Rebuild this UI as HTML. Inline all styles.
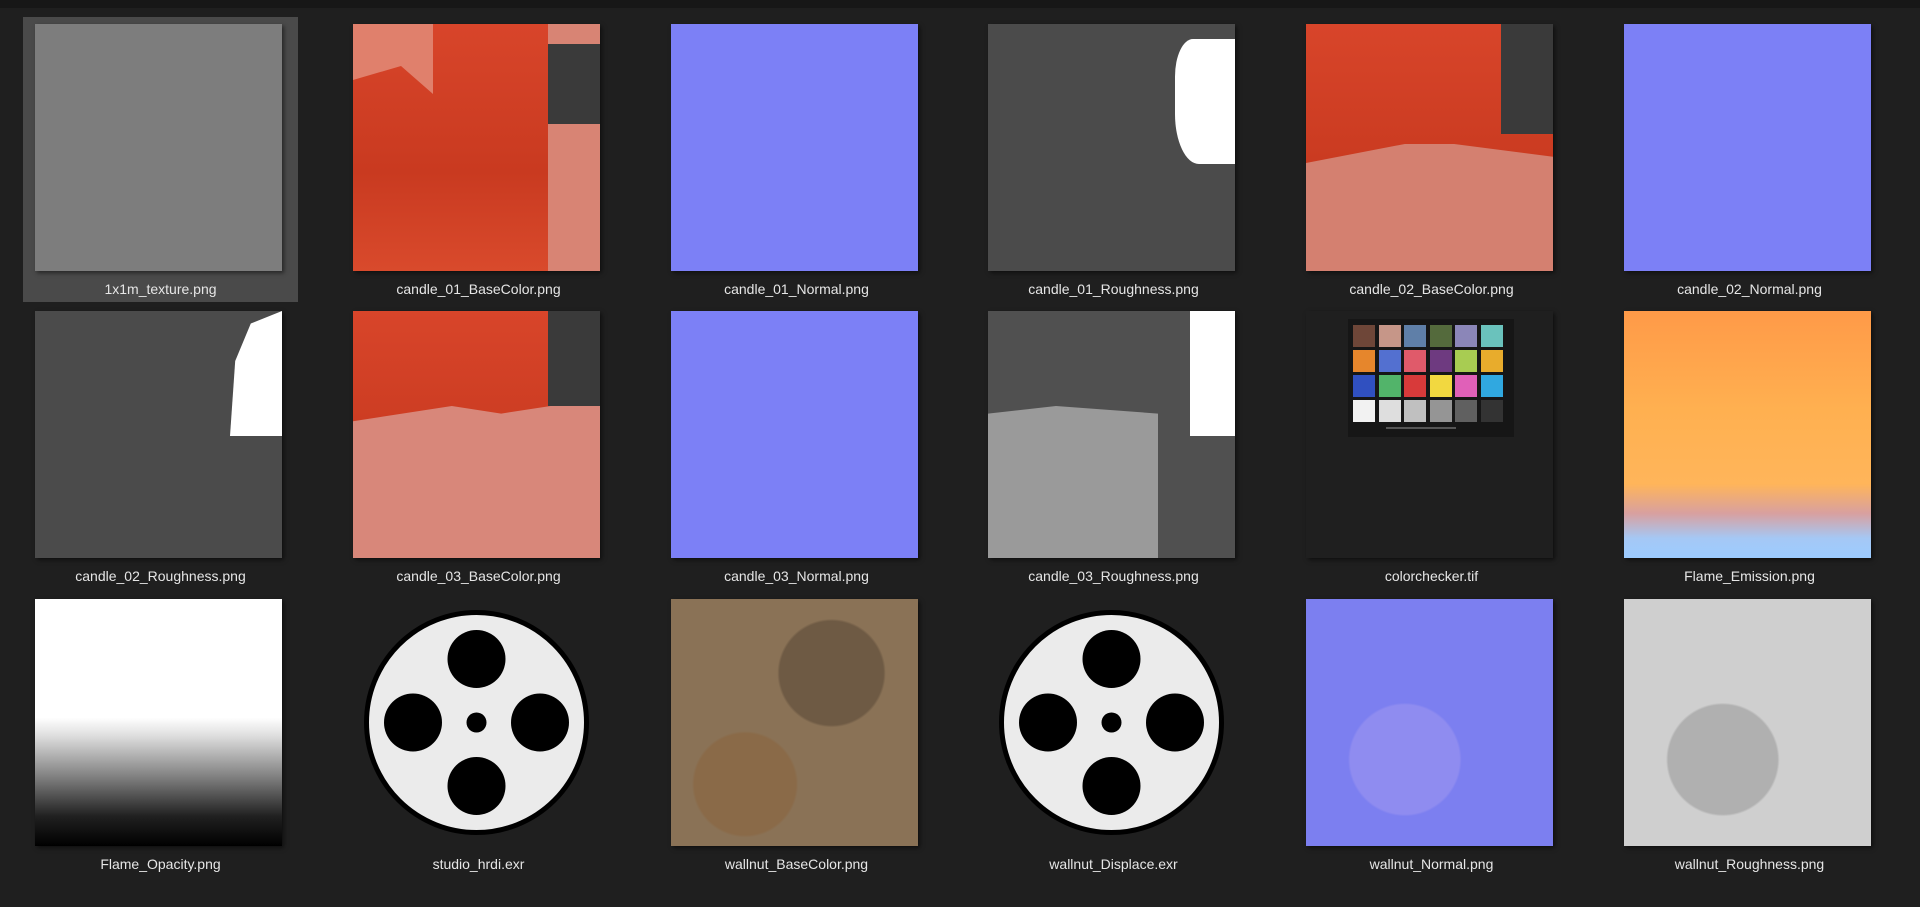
<!DOCTYPE html>
<html><head><meta charset="utf-8"><style>
*{margin:0;padding:0;box-sizing:border-box}
body{width:1920px;height:907px;background:#1f1f1f;overflow:hidden;position:relative;font-family:"Segoe UI","Liberation Sans",sans-serif}
.top{position:absolute;left:0;top:0;width:1920px;height:8px;background:#171717}
.sel{position:absolute;left:23px;top:17px;width:275px;height:285px;background:#4a4a4a}
.t{position:absolute;width:247px;height:247px;box-shadow:2px 2px 4px rgba(0,0,0,.5);overflow:hidden}
.l{position:absolute;width:317px;text-align:center;color:#e6e6e6;font-size:14px;line-height:18px}
.gray{background:#7d7d7d}
.red{background:linear-gradient(#d8452a,#c93a20 60%,#d94a2c)}
.nrm{background:#7c80f6}
.rough{background:#4b4b4b}
.cc{background:#1f1f1f}
.flame{background:linear-gradient(#ff9a48,#ffb050 40%,#ffb55a 70%,#d8a0a0 82%,#a5c8f5 92%,#9ccbff)}
.op{background:linear-gradient(#fff,#fff 48%,#e0e0e0 55%,#808080 72%,#202020 88%,#000)}
.wb{background:radial-gradient(circle at 30% 75%,#8a6a48 0 20%,transparent 21%),radial-gradient(circle at 65% 30%,#6e5a44 0 22%,transparent 23%),#8a7256}
.wn{background:radial-gradient(circle at 40% 65%,#8f8cf0 0 25%,transparent 26%),#7c7ff0}
.wr{background:radial-gradient(circle at 40% 65%,#b0b0b0 0 25%,transparent 26%),#cfcfcf}
</style></head><body>
<div class="top"></div>
<div class="sel"></div>

<div class="t gray" style="left:35px;top:24px"></div>
<div class="t red" style="left:353px;top:24px"><div style="position:absolute;left:0;top:0;width:80px;height:70px;background:#e0806c;clip-path:polygon(0 0,100% 0,100% 100%,60% 60%,0 80%)"></div><div style="position:absolute;left:195px;top:0;width:52px;height:247px;background:#d88474"></div><div style="position:absolute;left:195px;top:20px;width:52px;height:80px;background:#3a3a3a"></div></div>
<div class="t nrm" style="left:671px;top:24px"></div>
<div class="t rough" style="left:988px;top:24px"><div style="position:absolute;right:0;top:15px;width:60px;height:125px;background:#fff;border-radius:30% 0 0 40%"></div></div>
<div class="t red" style="left:1306px;top:24px"><div style="position:absolute;left:0;top:120px;width:247px;height:127px;background:#d48070;clip-path:polygon(0 15%,40% 0,60% 0,100% 10%,100% 100%,0 100%)"></div><div style="position:absolute;left:195px;top:0;width:52px;height:110px;background:#3a3a3a"></div></div>
<div class="t nrm" style="left:1624px;top:24px"></div>

<div class="t rough" style="left:35px;top:311px"><div style="position:absolute;right:0;top:0;width:52px;height:125px;background:#fff;clip-path:polygon(40% 10%,100% 0,100% 100%,0 100%,10% 40%)"></div></div>
<div class="t red" style="left:353px;top:311px"><div style="position:absolute;left:0;top:95px;width:247px;height:152px;background:#d8877a;clip-path:polygon(0 10%,40% 0,60% 5%,80% 0,100% 0,100% 100%,0 100%)"></div><div style="position:absolute;left:195px;top:0;width:52px;height:95px;background:#3a3a3a"></div></div>
<div class="t nrm" style="left:671px;top:311px"></div>
<div class="t rough" style="left:988px;top:311px;background:#505050"><div style="position:absolute;left:0;top:95px;width:170px;height:152px;background:#9a9a9a;clip-path:polygon(0 5%,40% 0,100% 5%,100% 100%,0 100%)"></div><div style="position:absolute;right:0;top:0;width:45px;height:125px;background:#fff"></div></div>
<div class="t cc" style="left:1306px;top:311px">
<svg width="247" height="247" style="position:absolute;left:0;top:0">
<rect x="42" y="8" width="166" height="118" fill="#161616"/>
<g>
<rect x="47" y="14" width="22" height="22" fill="#6e4638"/><rect x="73" y="14" width="22" height="22" fill="#c69688"/><rect x="98" y="14" width="22" height="22" fill="#5f7fa8"/><rect x="124" y="14" width="22" height="22" fill="#546a3c"/><rect x="149" y="14" width="22" height="22" fill="#8b86b8"/><rect x="175" y="14" width="22" height="22" fill="#6ac2bc"/>
<rect x="47" y="39" width="22" height="22" fill="#e6862c"/><rect x="73" y="39" width="22" height="22" fill="#5370d0"/><rect x="98" y="39" width="22" height="22" fill="#e05a6a"/><rect x="124" y="39" width="22" height="22" fill="#6e3a80"/><rect x="149" y="39" width="22" height="22" fill="#a8cc52"/><rect x="175" y="39" width="22" height="22" fill="#e8ac2c"/>
<rect x="47" y="64" width="22" height="22" fill="#3050c0"/><rect x="73" y="64" width="22" height="22" fill="#52b46a"/><rect x="98" y="64" width="22" height="22" fill="#d83a3a"/><rect x="124" y="64" width="22" height="22" fill="#f2d840"/><rect x="149" y="64" width="22" height="22" fill="#e060b8"/><rect x="175" y="64" width="22" height="22" fill="#30a8e0"/>
<rect x="47" y="89" width="22" height="22" fill="#f2f2f2"/><rect x="73" y="89" width="22" height="22" fill="#dedede"/><rect x="98" y="89" width="22" height="22" fill="#c0c0c0"/><rect x="124" y="89" width="22" height="22" fill="#959595"/><rect x="149" y="89" width="22" height="22" fill="#606060"/><rect x="175" y="89" width="22" height="22" fill="#333"/>
<rect x="80" y="116" width="70" height="2" fill="#555"/>
</g></svg></div>
<div class="t flame" style="left:1624px;top:311px"></div>

<div class="t op" style="left:35px;top:599px"></div>
<div class="t" style="left:353px;top:599px;box-shadow:none">
<svg width="247" height="247"><circle cx="123.5" cy="123.5" r="110" fill="#ebebeb" stroke="#000" stroke-width="5"/><circle cx="123.5" cy="60" r="29" fill="#000"/><circle cx="123.5" cy="187" r="29" fill="#000"/><circle cx="60" cy="123.5" r="29" fill="#000"/><circle cx="187" cy="123.5" r="29" fill="#000"/><circle cx="123.5" cy="123.5" r="10" fill="#000"/></svg></div>
<div class="t wb" style="left:671px;top:599px"></div>
<div class="t" style="left:988px;top:599px;box-shadow:none">
<svg width="247" height="247"><circle cx="123.5" cy="123.5" r="110" fill="#ebebeb" stroke="#000" stroke-width="5"/><circle cx="123.5" cy="60" r="29" fill="#000"/><circle cx="123.5" cy="187" r="29" fill="#000"/><circle cx="60" cy="123.5" r="29" fill="#000"/><circle cx="187" cy="123.5" r="29" fill="#000"/><circle cx="123.5" cy="123.5" r="10" fill="#000"/></svg></div>
<div class="t wn" style="left:1306px;top:599px"></div>
<div class="t wr" style="left:1624px;top:599px"></div>

<div class="l" style="left:2px;top:280px">1x1m_texture.png</div>
<div class="l" style="left:320px;top:280px">candle_01_BaseColor.png</div>
<div class="l" style="left:638px;top:280px">candle_01_Normal.png</div>
<div class="l" style="left:955px;top:280px">candle_01_Roughness.png</div>
<div class="l" style="left:1273px;top:280px">candle_02_BaseColor.png</div>
<div class="l" style="left:1591px;top:280px">candle_02_Normal.png</div>

<div class="l" style="left:2px;top:567px">candle_02_Roughness.png</div>
<div class="l" style="left:320px;top:567px">candle_03_BaseColor.png</div>
<div class="l" style="left:638px;top:567px">candle_03_Normal.png</div>
<div class="l" style="left:955px;top:567px">candle_03_Roughness.png</div>
<div class="l" style="left:1273px;top:567px">colorchecker.tif</div>
<div class="l" style="left:1591px;top:567px">Flame_Emission.png</div>

<div class="l" style="left:2px;top:855px">Flame_Opacity.png</div>
<div class="l" style="left:320px;top:855px">studio_hrdi.exr</div>
<div class="l" style="left:638px;top:855px">wallnut_BaseColor.png</div>
<div class="l" style="left:955px;top:855px">wallnut_Displace.exr</div>
<div class="l" style="left:1273px;top:855px">wallnut_Normal.png</div>
<div class="l" style="left:1591px;top:855px">wallnut_Roughness.png</div>
</body></html>
